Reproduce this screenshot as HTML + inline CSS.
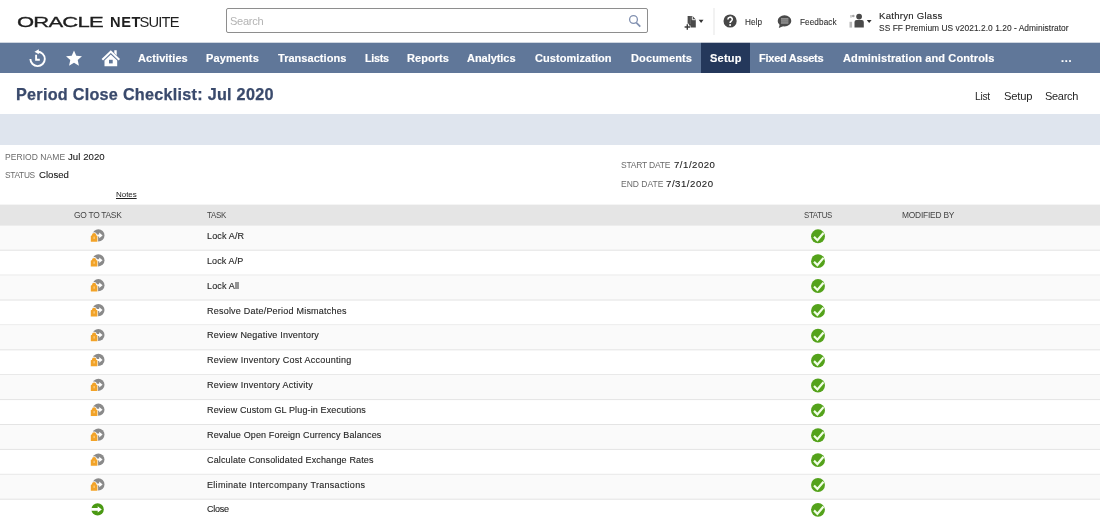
<!DOCTYPE html>
<html><head><meta charset="utf-8"><title>Period Close Checklist</title>
<style>
*{box-sizing:border-box;margin:0;padding:0}
html,body{width:1100px;height:523px;overflow:hidden;background:#fff}
body{font-family:"Liberation Sans",sans-serif;color:#262626;position:relative}
.tx{position:absolute;white-space:nowrap;line-height:20px;transform-origin:0 0}
#tl{position:absolute;left:0;top:0;width:1100px;height:523px;will-change:transform}
#hdr{position:absolute;left:0;top:0;width:1100px;height:43px;background:#fff}
#search{position:absolute;left:226px;top:8px;width:422px;height:25px;border:1px solid #8e8e8e;border-radius:2px;background:#fff}
#nav{position:absolute;left:0;top:43px;width:1100px;height:30px;background:#607799}
#nav .sel{position:absolute;left:701px;top:0;width:49px;height:30px;background:#24385b}
#band{position:absolute;left:0;top:114px;width:1100px;height:31px;background:#dfe5ee}
.ic{position:absolute}
</style></head><body>
<div id="hdr">
  <div id="search"></div>
  <svg class="ic" style="left:620px;top:8px" width="260" height="28" viewBox="620 8 260 28">
<circle cx="633.5" cy="19.5" r="3.9" fill="none" stroke="#8190b0" stroke-width="1.300"/><path d="M636.300 22.600l4 4" stroke="#8190b0" stroke-width="1.700" fill="none"/>
<path d="M687.600 16h4.900l3.300 3.500v7.900h-8.200z" fill="#4a4a4a"/><path d="M692.300 16.200v3.500h3.400" fill="none" stroke="#fff" stroke-width="0.900"/><path d="M690.300 16v8" stroke="#777" stroke-width="0.600"/>
<path d="M687.300 23.800v6.400M684.100 27h6.400" stroke="#fff" stroke-width="3.200" fill="none"/><path d="M687.300 24.300v5.400M684.600 27h5.400" stroke="#3c3c3c" stroke-width="1.400" fill="none"/>
<path d="M698.700 19.700h4.800l-2.400 3.200z" fill="#333"/>
<rect x="713.500" y="4" width="1" height="31" fill="#e6e6e6"/>
<circle cx="730.100" cy="21" r="6.600" fill="#474747"/><path d="M727.900 19.400a2.200 2.200 0 1 1 3.300 1.900c-.8.500-1.100.9-1.100 1.800" fill="none" stroke="#fff" stroke-width="1.600"/><circle cx="730.100" cy="25" r="1" fill="#fff"/>
<ellipse cx="784.500" cy="20.900" rx="6.800" ry="5.600" fill="#4a4a4a"/><path d="M780 23.500l-1.200 4.600 4.800-2.200z" fill="#4a4a4a"/><rect x="781" y="18" width="7.400" height="5.800" fill="#8e8e8e"/><path d="M781 19.900h7.400M781 21.800h7.400" stroke="#6a6a6a" stroke-width="0.600"/>
<rect x="849.500" y="21.800" width="2.600" height="5.800" fill="#b9b9b9"/><circle cx="853.300" cy="16" r="1.300" fill="#a5a5a5"/><rect x="850.200" y="15" width="1.600" height="2.600" fill="#c4c4c4"/>
<circle cx="859.100" cy="16.600" r="2.900" fill="#4a4a4a"/><path d="M854.500 27.600v-5.600a2 2 0 0 1 2-2h5.300a2 2 0 0 1 2 2v5.600z" fill="#4a4a4a"/>
<path d="M866.800 19.900h4.800l-2.400 3.100z" fill="#333"/>
</svg>
</div>
<div class="ic" style="left:0;top:42px;width:1100px;height:1px;background:#cfd6e0"></div><div class="ic" style="left:701px;top:42px;width:49px;height:1px;background:#bdc3ce"></div>
<div id="nav">
  <div class="sel"></div>
  <svg class="ic" style="left:24px;top:2px" width="104" height="26" viewBox="24 45 104 26"><path d="M37.6 51.700A7.200 7.200 0 1 1 30.400 58.900" fill="none" stroke="#fff" stroke-width="1.900"/><path d="M34.500 51.800l4.300-2.500v5z" fill="#fff"/><path d="M36.1 54.700v5h3.700" fill="none" stroke="#fff" stroke-width="1.900"/><path d="M74.00 50.50L76.29 55.74L81.99 56.30L77.71 60.11L78.94 65.70L74.00 62.80L69.06 65.70L70.29 60.11L66.01 56.30L71.71 55.74z" fill="#fff"/><path d="M102.300 59.800L110.800 51.600L119.300 59.800" fill="none" stroke="#fff" stroke-width="2.100"/><path d="M104.500 60.600L110.800 54.500L117.200 60.600V66.300H104.500z" fill="#fff"/><rect x="109" y="59.800" width="3.700" height="3.600" fill="#607799"/><path d="M114.300 50.200h2.400v5.200l-2.400-2.300z" fill="#fff"/></svg>
</div>
<div id="band"></div>
<svg class="ic" style="left:0;top:200px" width="1100" height="323" viewBox="0 200 1100 323">
<rect x="0" y="204.600" width="1100" height="21.20" fill="#e5e5e5"/>
<rect x="0" y="225.80" width="1100" height="24.90" fill="#fafafa"/>
<rect x="0" y="249.70" width="1100" height="1" fill="#e4e4e4"/>
<g transform="translate(98.400 235.40)"><circle cx="0" cy="0" r="6.100" fill="#8a8a8a"/><path d="M-3.500 -1h4.300v-1.800l3.400 2.800-3.400 2.800v-1.800h-4.300z" fill="#fff"/><path d="M-8.300 7v-6.600q0-.9.900-.9h.400a2.700 2.700 0 0 1 5.400 0h.400q.9 0 .9.900v6.600z" fill="#fcfcfc"/><path d="M-7.600 6.300v-5.700q0-.6.600-.6h.600v-.300a2.100 2.100 0 0 1 4.200 0v.300h.600q.6 0 .6.600v5.700z" fill="#f2a328"/><rect x="-4.800" y="1.200" width="1" height="2.300" fill="#fbdca6"/></g>
<g transform="translate(818 236.30)"><circle cx="0" cy="0" r="6.950" fill="#54a21b"/><path d="M-4 0.500l3.400 3.400 6.100-7.200" fill="none" stroke="#f2ffe6" stroke-width="2.200"/></g>
<rect x="0" y="274.60" width="1100" height="1" fill="#e4e4e4"/>
<g transform="translate(98.400 260.30)"><circle cx="0" cy="0" r="6.100" fill="#8a8a8a"/><path d="M-3.500 -1h4.300v-1.800l3.400 2.800-3.400 2.800v-1.800h-4.300z" fill="#fff"/><path d="M-8.300 7v-6.600q0-.9.900-.9h.400a2.700 2.700 0 0 1 5.400 0h.400q.9 0 .9.900v6.600z" fill="#fcfcfc"/><path d="M-7.600 6.300v-5.700q0-.6.600-.6h.600v-.300a2.100 2.100 0 0 1 4.200 0v.300h.600q.6 0 .6.600v5.700z" fill="#f2a328"/><rect x="-4.800" y="1.200" width="1" height="2.300" fill="#fbdca6"/></g>
<g transform="translate(818 261.17)"><circle cx="0" cy="0" r="6.950" fill="#54a21b"/><path d="M-4 0.500l3.400 3.400 6.100-7.200" fill="none" stroke="#f2ffe6" stroke-width="2.200"/></g>
<rect x="0" y="275.60" width="1100" height="24.90" fill="#fafafa"/>
<rect x="0" y="299.50" width="1100" height="1" fill="#e4e4e4"/>
<g transform="translate(98.400 285.20)"><circle cx="0" cy="0" r="6.100" fill="#8a8a8a"/><path d="M-3.500 -1h4.300v-1.800l3.400 2.800-3.400 2.800v-1.800h-4.300z" fill="#fff"/><path d="M-8.300 7v-6.600q0-.9.900-.9h.400a2.700 2.700 0 0 1 5.400 0h.400q.9 0 .9.900v6.600z" fill="#fcfcfc"/><path d="M-7.600 6.300v-5.700q0-.6.600-.6h.600v-.300a2.100 2.100 0 0 1 4.200 0v.300h.600q.6 0 .6.600v5.700z" fill="#f2a328"/><rect x="-4.800" y="1.200" width="1" height="2.300" fill="#fbdca6"/></g>
<g transform="translate(818 286.04)"><circle cx="0" cy="0" r="6.950" fill="#54a21b"/><path d="M-4 0.500l3.400 3.400 6.100-7.200" fill="none" stroke="#f2ffe6" stroke-width="2.200"/></g>
<rect x="0" y="324.40" width="1100" height="1" fill="#e4e4e4"/>
<g transform="translate(98.400 310.10)"><circle cx="0" cy="0" r="6.100" fill="#8a8a8a"/><path d="M-3.500 -1h4.300v-1.800l3.400 2.800-3.400 2.800v-1.800h-4.300z" fill="#fff"/><path d="M-8.300 7v-6.600q0-.9.900-.9h.400a2.700 2.700 0 0 1 5.400 0h.400q.9 0 .9.900v6.600z" fill="#fcfcfc"/><path d="M-7.600 6.300v-5.700q0-.6.600-.6h.600v-.300a2.100 2.100 0 0 1 4.200 0v.300h.600q.6 0 .6.600v5.700z" fill="#f2a328"/><rect x="-4.800" y="1.200" width="1" height="2.300" fill="#fbdca6"/></g>
<g transform="translate(818 310.91)"><circle cx="0" cy="0" r="6.950" fill="#54a21b"/><path d="M-4 0.500l3.400 3.400 6.100-7.200" fill="none" stroke="#f2ffe6" stroke-width="2.200"/></g>
<rect x="0" y="325.40" width="1100" height="24.90" fill="#fafafa"/>
<rect x="0" y="349.30" width="1100" height="1" fill="#e4e4e4"/>
<g transform="translate(98.400 335.00)"><circle cx="0" cy="0" r="6.100" fill="#8a8a8a"/><path d="M-3.500 -1h4.300v-1.800l3.400 2.800-3.400 2.800v-1.800h-4.300z" fill="#fff"/><path d="M-8.300 7v-6.600q0-.9.900-.9h.400a2.700 2.700 0 0 1 5.400 0h.400q.9 0 .9.900v6.600z" fill="#fcfcfc"/><path d="M-7.600 6.300v-5.700q0-.6.600-.6h.600v-.300a2.100 2.100 0 0 1 4.200 0v.300h.600q.6 0 .6.600v5.700z" fill="#f2a328"/><rect x="-4.800" y="1.200" width="1" height="2.300" fill="#fbdca6"/></g>
<g transform="translate(818 335.78)"><circle cx="0" cy="0" r="6.950" fill="#54a21b"/><path d="M-4 0.500l3.400 3.400 6.100-7.200" fill="none" stroke="#f2ffe6" stroke-width="2.200"/></g>
<rect x="0" y="374.20" width="1100" height="1" fill="#e4e4e4"/>
<g transform="translate(98.400 359.90)"><circle cx="0" cy="0" r="6.100" fill="#8a8a8a"/><path d="M-3.500 -1h4.300v-1.800l3.400 2.800-3.400 2.800v-1.800h-4.300z" fill="#fff"/><path d="M-8.300 7v-6.600q0-.9.900-.9h.400a2.700 2.700 0 0 1 5.400 0h.400q.9 0 .9.900v6.600z" fill="#fcfcfc"/><path d="M-7.600 6.300v-5.700q0-.6.600-.6h.600v-.300a2.100 2.100 0 0 1 4.200 0v.300h.600q.6 0 .6.600v5.700z" fill="#f2a328"/><rect x="-4.800" y="1.200" width="1" height="2.300" fill="#fbdca6"/></g>
<g transform="translate(818 360.65)"><circle cx="0" cy="0" r="6.950" fill="#54a21b"/><path d="M-4 0.500l3.400 3.400 6.100-7.200" fill="none" stroke="#f2ffe6" stroke-width="2.200"/></g>
<rect x="0" y="375.20" width="1100" height="24.90" fill="#fafafa"/>
<rect x="0" y="399.10" width="1100" height="1" fill="#e4e4e4"/>
<g transform="translate(98.400 384.80)"><circle cx="0" cy="0" r="6.100" fill="#8a8a8a"/><path d="M-3.500 -1h4.300v-1.800l3.400 2.800-3.400 2.800v-1.800h-4.300z" fill="#fff"/><path d="M-8.300 7v-6.600q0-.9.900-.9h.400a2.700 2.700 0 0 1 5.400 0h.400q.9 0 .9.900v6.600z" fill="#fcfcfc"/><path d="M-7.600 6.300v-5.700q0-.6.600-.6h.600v-.300a2.100 2.100 0 0 1 4.200 0v.300h.600q.6 0 .6.600v5.700z" fill="#f2a328"/><rect x="-4.800" y="1.200" width="1" height="2.300" fill="#fbdca6"/></g>
<g transform="translate(818 385.52)"><circle cx="0" cy="0" r="6.950" fill="#54a21b"/><path d="M-4 0.500l3.400 3.400 6.100-7.200" fill="none" stroke="#f2ffe6" stroke-width="2.200"/></g>
<rect x="0" y="424.00" width="1100" height="1" fill="#e4e4e4"/>
<g transform="translate(98.400 409.70)"><circle cx="0" cy="0" r="6.100" fill="#8a8a8a"/><path d="M-3.500 -1h4.300v-1.800l3.400 2.800-3.400 2.800v-1.800h-4.300z" fill="#fff"/><path d="M-8.300 7v-6.600q0-.9.900-.9h.400a2.700 2.700 0 0 1 5.400 0h.400q.9 0 .9.900v6.600z" fill="#fcfcfc"/><path d="M-7.600 6.300v-5.700q0-.6.600-.6h.600v-.300a2.100 2.100 0 0 1 4.200 0v.300h.600q.6 0 .6.600v5.700z" fill="#f2a328"/><rect x="-4.800" y="1.200" width="1" height="2.300" fill="#fbdca6"/></g>
<g transform="translate(818 410.39)"><circle cx="0" cy="0" r="6.950" fill="#54a21b"/><path d="M-4 0.500l3.400 3.400 6.100-7.200" fill="none" stroke="#f2ffe6" stroke-width="2.200"/></g>
<rect x="0" y="425.00" width="1100" height="24.90" fill="#fafafa"/>
<rect x="0" y="448.90" width="1100" height="1" fill="#e4e4e4"/>
<g transform="translate(98.400 434.60)"><circle cx="0" cy="0" r="6.100" fill="#8a8a8a"/><path d="M-3.500 -1h4.300v-1.800l3.400 2.800-3.400 2.800v-1.800h-4.300z" fill="#fff"/><path d="M-8.300 7v-6.600q0-.9.900-.9h.400a2.700 2.700 0 0 1 5.400 0h.400q.9 0 .9.900v6.600z" fill="#fcfcfc"/><path d="M-7.600 6.300v-5.700q0-.6.600-.6h.600v-.300a2.100 2.100 0 0 1 4.200 0v.300h.600q.6 0 .6.600v5.700z" fill="#f2a328"/><rect x="-4.800" y="1.200" width="1" height="2.300" fill="#fbdca6"/></g>
<g transform="translate(818 435.26)"><circle cx="0" cy="0" r="6.950" fill="#54a21b"/><path d="M-4 0.500l3.400 3.400 6.100-7.200" fill="none" stroke="#f2ffe6" stroke-width="2.200"/></g>
<rect x="0" y="473.80" width="1100" height="1" fill="#e4e4e4"/>
<g transform="translate(98.400 459.50)"><circle cx="0" cy="0" r="6.100" fill="#8a8a8a"/><path d="M-3.500 -1h4.300v-1.800l3.400 2.800-3.400 2.800v-1.800h-4.300z" fill="#fff"/><path d="M-8.300 7v-6.600q0-.9.900-.9h.400a2.700 2.700 0 0 1 5.400 0h.400q.9 0 .9.900v6.600z" fill="#fcfcfc"/><path d="M-7.600 6.300v-5.700q0-.6.600-.6h.600v-.300a2.100 2.100 0 0 1 4.200 0v.300h.600q.6 0 .6.600v5.700z" fill="#f2a328"/><rect x="-4.800" y="1.200" width="1" height="2.300" fill="#fbdca6"/></g>
<g transform="translate(818 460.13)"><circle cx="0" cy="0" r="6.950" fill="#54a21b"/><path d="M-4 0.500l3.400 3.400 6.100-7.200" fill="none" stroke="#f2ffe6" stroke-width="2.200"/></g>
<rect x="0" y="474.80" width="1100" height="24.90" fill="#fafafa"/>
<rect x="0" y="498.70" width="1100" height="1" fill="#e4e4e4"/>
<g transform="translate(98.400 484.40)"><circle cx="0" cy="0" r="6.100" fill="#8a8a8a"/><path d="M-3.500 -1h4.300v-1.800l3.400 2.800-3.400 2.800v-1.800h-4.300z" fill="#fff"/><path d="M-8.300 7v-6.600q0-.9.900-.9h.400a2.700 2.700 0 0 1 5.400 0h.400q.9 0 .9.900v6.600z" fill="#fcfcfc"/><path d="M-7.600 6.300v-5.700q0-.6.600-.6h.600v-.300a2.100 2.100 0 0 1 4.200 0v.300h.600q.6 0 .6.600v5.700z" fill="#f2a328"/><rect x="-4.800" y="1.200" width="1" height="2.300" fill="#fbdca6"/></g>
<g transform="translate(818 485.00)"><circle cx="0" cy="0" r="6.950" fill="#54a21b"/><path d="M-4 0.500l3.400 3.400 6.100-7.200" fill="none" stroke="#f2ffe6" stroke-width="2.200"/></g>
<rect x="0" y="523.60" width="1100" height="1" fill="#e4e4e4"/>
<g transform="translate(97.600 509.400)"><circle cx="0" cy="0" r="6.200" fill="#4a9913"/><path d="M-6.500 -1.400h6.600v-1.800l4.100 3.200-4.100 3.200v-1.800h-6.600z" fill="#fff"/></g>
<g transform="translate(818 509.87)"><circle cx="0" cy="0" r="6.950" fill="#54a21b"/><path d="M-4 0.500l3.400 3.400 6.100-7.200" fill="none" stroke="#f2ffe6" stroke-width="2.200"/></g>
</svg>
<div id="tl">
<div class="tx" style="left:17.40px;top:12.00px;font-size:14.7px;color:#1f1f1f;letter-spacing:-0.533px;transform:scaleX(1.5000);-webkit-text-stroke:0.3px #1f1f1f">ORACLE</div>
<div class="tx" style="left:110.00px;top:12.00px;font-size:14.7px;font-weight:bold;color:#1f1f1f;letter-spacing:0.600px;">NET</div>
<div class="tx" style="left:139.50px;top:12.00px;font-size:14.7px;color:#1f1f1f;letter-spacing:-0.800px;">SUITE</div>
<div class="tx" style="left:230.30px;top:11.00px;font-size:11px;color:#b3b3b3;letter-spacing:-0.300px;transform:scaleX(1.0061);">Search</div>
<div class="tx" style="left:745.00px;top:13.00px;font-size:8.2px;color:#303030;letter-spacing:0.067px;-webkit-text-stroke:0.1px #303030">Help</div>
<div class="tx" style="left:800.00px;top:13.00px;font-size:8.2px;color:#303030;letter-spacing:0.086px;-webkit-text-stroke:0.1px #303030">Feedback</div>
<div class="tx" style="left:879.00px;top:6.00px;font-size:9.6px;color:#222222;letter-spacing:0.250px;-webkit-text-stroke:0.1px #222222">Kathryn Glass</div>
<div class="tx" style="left:879.00px;top:18.00px;font-size:8.4px;color:#2c2c2c;letter-spacing:0.043px;-webkit-text-stroke:0.1px #2c2c2c">SS FF Premium US v2021.2.0 1.20 - Administrator</div>
<div class="tx" style="left:138.00px;top:48.00px;font-size:11px;font-weight:bold;color:#fff;letter-spacing:0.089px;-webkit-text-stroke:0.15px #ffffff">Activities</div>
<div class="tx" style="left:206.00px;top:48.00px;font-size:11px;font-weight:bold;color:#fff;letter-spacing:0.114px;-webkit-text-stroke:0.15px #ffffff">Payments</div>
<div class="tx" style="left:278.00px;top:48.00px;font-size:11px;font-weight:bold;color:#fff;letter-spacing:0.036px;-webkit-text-stroke:0.15px #ffffff">Transactions</div>
<div class="tx" style="left:364.80px;top:48.00px;font-size:11px;font-weight:bold;color:#fff;letter-spacing:-0.300px;transform:scaleX(0.9761);-webkit-text-stroke:0.15px #ffffff">Lists</div>
<div class="tx" style="left:407.00px;top:48.00px;font-size:11px;font-weight:bold;color:#fff;letter-spacing:0.067px;-webkit-text-stroke:0.15px #ffffff">Reports</div>
<div class="tx" style="left:467.00px;top:48.00px;font-size:11px;font-weight:bold;color:#fff;letter-spacing:-0.050px;-webkit-text-stroke:0.15px #ffffff">Analytics</div>
<div class="tx" style="left:535.00px;top:48.00px;font-size:11px;font-weight:bold;color:#fff;letter-spacing:0.067px;-webkit-text-stroke:0.15px #ffffff">Customization</div>
<div class="tx" style="left:631.00px;top:48.00px;font-size:11px;font-weight:bold;color:#fff;letter-spacing:0.125px;-webkit-text-stroke:0.15px #ffffff">Documents</div>
<div class="tx" style="left:710.00px;top:48.00px;font-size:11px;font-weight:bold;color:#fff;letter-spacing:0.250px;-webkit-text-stroke:0.15px #ffffff">Setup</div>
<div class="tx" style="left:759.00px;top:48.00px;font-size:11px;font-weight:bold;color:#fff;letter-spacing:-0.255px;-webkit-text-stroke:0.15px #ffffff">Fixed Assets</div>
<div class="tx" style="left:843.00px;top:48.00px;font-size:11px;font-weight:bold;color:#fff;letter-spacing:0.108px;-webkit-text-stroke:0.15px #ffffff">Administration and Controls</div>
<div class="tx" style="left:1061.00px;top:48.00px;font-size:11px;font-weight:bold;color:#fff;letter-spacing:0.700px;-webkit-text-stroke:0.15px #ffffff">...</div>
<div class="tx" style="left:16.00px;top:84.00px;font-size:16.2px;font-weight:bold;color:#3a4a6c;letter-spacing:0.265px;-webkit-text-stroke:0.25px #3a4a6c">Period Close Checklist: Jul 2020</div>
<div class="tx" style="left:975.10px;top:86.00px;font-size:11.2px;color:#262626;letter-spacing:-0.300px;transform:scaleX(0.9178);">List</div>
<div class="tx" style="left:1004.00px;top:86.00px;font-size:11.2px;color:#262626;letter-spacing:-0.200px;">Setup</div>
<div class="tx" style="left:1045.00px;top:86.00px;font-size:11.2px;color:#262626;letter-spacing:-0.300px;transform:scaleX(0.9824);">Search</div>
<div class="tx" style="left:5.00px;top:147.00px;font-size:8.5px;color:#6a6a6a;letter-spacing:0.060px;">PERIOD NAME</div>
<div class="tx" style="left:68.00px;top:147.00px;font-size:9.6px;color:#1a1a1a;letter-spacing:0.057px;-webkit-text-stroke:0.1px #1a1a1a">Jul 2020</div>
<div class="tx" style="left:5.00px;top:165.00px;font-size:8.5px;color:#6a6a6a;letter-spacing:-0.300px;transform:scaleX(0.9807);">STATUS</div>
<div class="tx" style="left:39.00px;top:165.00px;font-size:9.6px;color:#1a1a1a;letter-spacing:0.000px;-webkit-text-stroke:0.1px #1a1a1a">Closed</div>
<div class="tx" style="left:621.00px;top:155.00px;font-size:8.5px;color:#6a6a6a;letter-spacing:-0.200px;">START DATE</div>
<div class="tx" style="left:674.00px;top:155.00px;font-size:9.6px;color:#1a1a1a;letter-spacing:0.514px;-webkit-text-stroke:0.1px #1a1a1a">7/1/2020</div>
<div class="tx" style="left:621.00px;top:174.00px;font-size:8.5px;color:#6a6a6a;letter-spacing:0.000px;">END DATE</div>
<div class="tx" style="left:666.00px;top:174.00px;font-size:9.6px;color:#1a1a1a;letter-spacing:0.550px;-webkit-text-stroke:0.1px #1a1a1a">7/31/2020</div>
<div class="tx" style="left:116.00px;top:185.00px;font-size:8px;color:#222;letter-spacing:-0.050px;text-decoration:underline">Notes</div>
<div class="tx" style="left:74.00px;top:205.00px;font-size:8.4px;color:#444;letter-spacing:-0.300px;transform:scaleX(1.0085);">GO TO TASK</div>
<div class="tx" style="left:207.00px;top:205.00px;font-size:8.4px;color:#444;letter-spacing:-0.300px;transform:scaleX(0.9500);">TASK</div>
<div class="tx" style="left:804.00px;top:205.00px;font-size:8.4px;color:#444;letter-spacing:-0.300px;transform:scaleX(0.9336);">STATUS</div>
<div class="tx" style="left:902.00px;top:205.00px;font-size:8.4px;color:#444;letter-spacing:-0.200px;">MODIFIED BY</div>
<div class="tx" style="left:207.00px;top:226.00px;font-size:9px;color:#262626;letter-spacing:0.143px;-webkit-text-stroke:0.12px #262626">Lock A/R</div>
<div class="tx" style="left:207.00px;top:251.00px;font-size:9px;color:#262626;letter-spacing:0.114px;-webkit-text-stroke:0.12px #262626">Lock A/P</div>
<div class="tx" style="left:207.00px;top:276.00px;font-size:9px;color:#262626;letter-spacing:0.143px;-webkit-text-stroke:0.12px #262626">Lock All</div>
<div class="tx" style="left:207.00px;top:301.00px;font-size:9px;color:#262626;letter-spacing:0.221px;-webkit-text-stroke:0.12px #262626">Resolve Date/Period Mismatches</div>
<div class="tx" style="left:207.00px;top:325.00px;font-size:9px;color:#262626;letter-spacing:0.200px;-webkit-text-stroke:0.12px #262626">Review Negative Inventory</div>
<div class="tx" style="left:207.00px;top:350.00px;font-size:9px;color:#262626;letter-spacing:0.245px;-webkit-text-stroke:0.12px #262626">Review Inventory Cost Accounting</div>
<div class="tx" style="left:207.00px;top:375.00px;font-size:9px;color:#262626;letter-spacing:0.258px;-webkit-text-stroke:0.12px #262626">Review Inventory Activity</div>
<div class="tx" style="left:207.00px;top:400.00px;font-size:9px;color:#262626;letter-spacing:0.135px;-webkit-text-stroke:0.12px #262626">Review Custom GL Plug-in Executions</div>
<div class="tx" style="left:207.00px;top:425.00px;font-size:9px;color:#262626;letter-spacing:0.141px;-webkit-text-stroke:0.12px #262626">Revalue Open Foreign Currency Balances</div>
<div class="tx" style="left:207.00px;top:450.00px;font-size:9px;color:#262626;letter-spacing:0.150px;-webkit-text-stroke:0.12px #262626">Calculate Consolidated Exchange Rates</div>
<div class="tx" style="left:207.00px;top:475.00px;font-size:9px;color:#262626;letter-spacing:0.306px;-webkit-text-stroke:0.12px #262626">Eliminate Intercompany Transactions</div>
<div class="tx" style="left:207.00px;top:499.00px;font-size:9px;color:#262626;letter-spacing:-0.250px;-webkit-text-stroke:0.12px #262626">Close</div>
</div>
</body></html>
